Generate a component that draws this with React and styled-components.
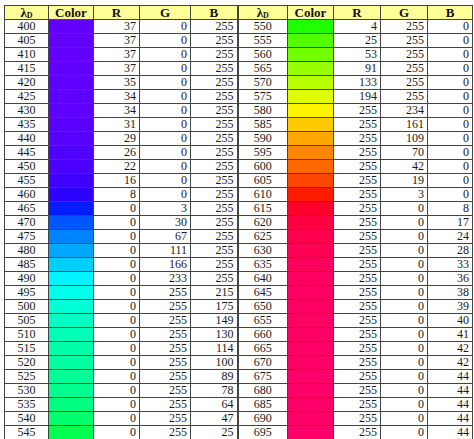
import React from "react";
import styled, { createGlobalStyle } from "styled-components";

const Global = createGlobalStyle`
  html, body { margin: 0; padding: 0; background: #fff; }
  body, table { font-family: "Liberation Serif", "Times New Roman", serif; }
`;

const Page = styled.div`
  padding: 5px 0 0 4px;
`;

const Table = styled.table`
  font-family: "Liberation Serif", "Times New Roman", serif;
  border-collapse: collapse;
  table-layout: fixed;
  width: 468px;
  border-left: 1px solid #333;
  border-right: 1px solid #333;
  border-bottom: 2px solid #777;
  border-top: 1px solid #555;
  color: #1a1a1a;
`;

const Col = styled.col`
  width: ${(p) => p.$w}px;
`;

const HeadCell = styled.th`
  background: #ffff99;
  height: 13px;
  padding: 0;
  font-size: 13px;
  font-weight: bold;
  line-height: 13px;
  text-align: center;
  color: #111;
  border: 1px solid #444;
  border-left-width: ${(p) => (p.$split ? 2 : 1)}px;
  overflow: hidden;
`;

const Sub = styled.sub`
  font-size: 8px;
  vertical-align: -1px;
  line-height: 0;
`;

const Cell = styled.td`
  height: 13px;
  padding: 0 ${(p) => (p.$align === "right" ? 3 : 0)}px 0 0;
  font-size: 12px;
  line-height: 13px;
  text-align: ${(p) => p.$align || "center"};
  border: 1px solid #444;
  border-left-width: ${(p) => (p.$split ? 2 : 1)}px;
  white-space: nowrap;
  overflow: hidden;
`;

const Swatch = styled.td`
  height: 13px;
  padding: 0;
  border: 1px solid #444;
  background: ${(p) => p.$bg};
`;

const left = [
  [400, 37, 0, 255], [405, 37, 0, 255], [410, 37, 0, 255], [415, 37, 0, 255],
  [420, 35, 0, 255], [425, 34, 0, 255], [430, 34, 0, 255], [435, 31, 0, 255],
  [440, 29, 0, 255], [445, 26, 0, 255], [450, 22, 0, 255], [455, 16, 0, 255],
  [460, 8, 0, 255], [465, 0, 3, 255], [470, 0, 30, 255], [475, 0, 67, 255],
  [480, 0, 111, 255], [485, 0, 166, 255], [490, 0, 233, 255], [495, 0, 255, 215],
  [500, 0, 255, 175], [505, 0, 255, 149], [510, 0, 255, 130], [515, 0, 255, 114],
  [520, 0, 255, 100], [525, 0, 255, 89], [530, 0, 255, 78], [535, 0, 255, 64],
  [540, 0, 255, 47], [545, 0, 255, 25],
];

const right = [
  [550, 4, 255, 0], [555, 25, 255, 0], [560, 53, 255, 0], [565, 91, 255, 0],
  [570, 133, 255, 0], [575, 194, 255, 0], [580, 255, 234, 0], [585, 255, 161, 0],
  [590, 255, 109, 0], [595, 255, 70, 0], [600, 255, 42, 0], [605, 255, 19, 0],
  [610, 255, 3, 0], [615, 255, 0, 8], [620, 255, 0, 17], [625, 255, 0, 24],
  [630, 255, 0, 28], [635, 255, 0, 33], [640, 255, 0, 36], [645, 255, 0, 38],
  [650, 255, 0, 39], [655, 255, 0, 40], [660, 255, 0, 41], [665, 255, 0, 42],
  [670, 255, 0, 42], [675, 255, 0, 44], [680, 255, 0, 44], [685, 255, 0, 44],
  [690, 255, 0, 44], [695, 255, 0, 44],
];

const widths = [44, 45, 46, 51, 47, 50, 46, 47, 47, 45];

const g = (v) => Math.round(255 * Math.sqrt(v / 255));
const swatch = ([, r, gg, b]) => `rgb(${g(r)}, ${g(gg)}, ${g(b)})`;

function Half({ row, split }) {
  const [l, r, gg, b] = row;
  return (
    <>
      <Cell $split={split}>{l}</Cell>
      <Swatch $bg={swatch(row)} />
      <Cell $align="right">{r}</Cell>
      <Cell $align="right">{gg}</Cell>
      <Cell $align="right">{b}</Cell>
    </>
  );
}

function HeadHalf({ split }) {
  return (
    <>
      <HeadCell $split={split}>
        λ<Sub>D</Sub>
      </HeadCell>
      <HeadCell>Color</HeadCell>
      <HeadCell>R</HeadCell>
      <HeadCell>G</HeadCell>
      <HeadCell>B</HeadCell>
    </>
  );
}

export default function App() {
  return (
    <>
      <Global />
      <Page>
        <Table>
          <colgroup>
            {widths.map((w, i) => (
              <Col key={i} $w={w} />
            ))}
          </colgroup>
          <thead>
            <tr>
              <HeadHalf />
              <HeadHalf split />
            </tr>
          </thead>
          <tbody>
            {left.map((row, i) => (
              <tr key={row[0]}>
                <Half row={row} />
                <Half row={right[i]} split />
              </tr>
            ))}
          </tbody>
        </Table>
      </Page>
    </>
  );
}
